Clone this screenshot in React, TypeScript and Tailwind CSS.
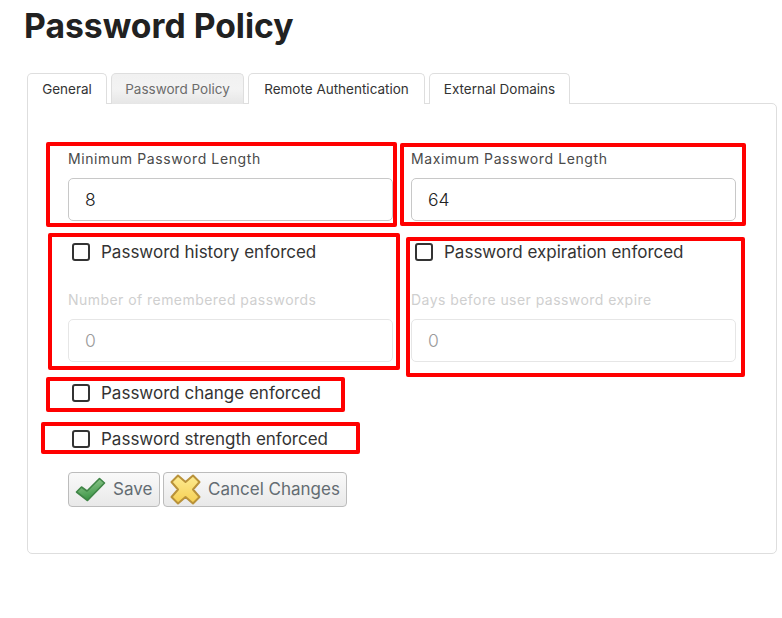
import { useState } from 'react';

const redBoxes = [
  'left-[46px] top-[142px] w-[351px] h-[85px]',
  'left-[400px] top-[143px] w-[346px] h-[83px]',
  'left-[48px] top-[233px] w-[352px] h-[137px]',
  'left-[406px] top-[237px] w-[339px] h-[140px]',
  'left-[46px] top-[377px] w-[299px] h-[35px]',
  'left-[41px] top-[422px] w-[319px] h-[32px]',
];

function Tab({ label, active, className }: { label: string; active?: boolean; className: string }) {
  return (
    <div
      className={`h-[31px] flex items-center justify-center rounded-t-[5px] border border-b-0 border-[#dedede] text-[13.5px] ${className} ${
        active ? 'bg-gradient-to-b from-[#f1f1f1] via-[#f3f3f3] to-[#e6e6e6] text-[#6c6c6c]' : 'bg-white text-[#333]'
      }`}
    >
      {label}
    </div>
  );
}

function Field({ label, value, disabled }: { label: string; value: string; disabled?: boolean }) {
  return (
    <div className="flex flex-col">
      <label
        className={`text-[14px] leading-5 pt-px -mb-px ${
          disabled ? 'text-[#cfcfcf] tracking-[0.45px]' : 'text-[#4a4a4a] tracking-[0.6px]'
        }`}
      >
        {label}
      </label>
      <input
        readOnly
        value={value}
        disabled={disabled}
        className={`mt-[10px] h-[43px] w-full rounded-[5px] border bg-white px-[16px] text-[17.5px] font-light outline-none ${
          disabled ? 'border-[#e6e6e6] text-[#9a9a9a]' : 'border-[#c8c8c8] text-[#222]'
        }`}
      />
    </div>
  );
}

function Check({ label }: { label: string }) {
  const [checked, setChecked] = useState(false);
  return (
    <label className="flex items-center h-[24px] pl-[4px]">
      <span
        onClick={() => setChecked(!checked)}
        className={`size-[18px] rounded-[3px] border-2 border-[#333] ${checked ? 'bg-[#333]' : 'bg-white'}`}
      />
      <span className="ml-[11px] pt-[2px] text-[17px] text-[#333]">{label}</span>
    </label>
  );
}

function CheckIcon() {
  return (
    <svg width="31" height="25" viewBox="0 0 31 25">
      <defs>
        <linearGradient id="chk" x1="0" y1="0" x2="0.3" y2="1">
          <stop offset="0" stopColor="#9fd09a" />
          <stop offset="1" stopColor="#3a9445" />
        </linearGradient>
      </defs>
      <path
        d="M1.5 15 L6.5 10 L12 14 L24.5 1.5 L29.5 6 L12.5 23.5 Z"
        fill="url(#chk)"
        stroke="#3f8546"
        strokeWidth="1.6"
        strokeLinejoin="round"
      />
    </svg>
  );
}

function CrossIcon() {
  return (
    <svg width="31" height="31" viewBox="0 0 31 31">
      <defs>
        <linearGradient id="crs" x1="0" y1="0" x2="0" y2="1">
          <stop offset="0" stopColor="#fdeb92" />
          <stop offset="1" stopColor="#f5cf52" />
        </linearGradient>
      </defs>
      <path
        d="M8 1.5 L15.5 8 L23 1.5 L29.5 8 L23 15.5 L29.5 23 L23 29.5 L15.5 23 L8 29.5 L1.5 23 L8 15.5 L1.5 8 Z"
        fill="url(#crs)"
        stroke="#b9923a"
        strokeWidth="2"
        strokeLinejoin="round"
      />
    </svg>
  );
}

function App() {
  return (
    <div className="relative w-[782px] h-[618px] overflow-hidden bg-white font-['Inter',sans-serif]">
      <div className="pl-[24px] pt-[4px]">
        <h1 className="text-[33.7px] leading-[44px] font-bold text-[#212121]">Password Policy</h1>
      </div>

      <div className="ml-[27px] mt-[25px] w-[750px]">
        <div className="flex gap-[4px]">
          <Tab label="General" className="w-[80px]" />
          <Tab label="Password Policy" active className="w-[133px]" />
          <Tab label="Remote Authentication" className="w-[177px]" />
          <Tab label="External Domains" className="w-[141px]" />
        </div>

        <div className="-mt-px h-[451px] rounded-b-[5px] rounded-tr-[5px] border border-[#dedede] bg-white pl-[40px] pt-[44px]">
          <div className="grid grid-cols-[325px_325px] gap-x-[18px]">
            <Field label="Minimum Password Length" value="8" />
            <Field label="Maximum Password Length" value="64" />

            <div className="mt-[19px]">
              <Check label="Password history enforced" />
              <div className="mt-[25px]">
                <Field label="Number of remembered passwords" value="0" disabled />
              </div>
            </div>
            <div className="mt-[19px]">
              <Check label="Password expiration enforced" />
              <div className="mt-[25px]">
                <Field label="Days before user password expire" value="0" disabled />
              </div>
            </div>
          </div>

          <div className="mt-[19px]">
            <Check label="Password change enforced" />
          </div>
          <div className="mt-[22px]">
            <Check label="Password strength enforced" />
          </div>

          <div className="mt-[21px] flex gap-[3px]">
            <button className="h-[35px] w-[92px] flex items-center rounded-[4px] border border-[#bcbcbc] bg-gradient-to-b from-[#f9f9f9] to-[#e9e9e9] pl-[6px] text-[17px] text-[#636c72]">
              <CheckIcon />
              <span className="ml-[7px]">Save</span>
            </button>
            <button className="h-[35px] w-[184px] flex items-center rounded-[4px] border border-[#bcbcbc] bg-gradient-to-b from-[#f9f9f9] to-[#e9e9e9] pl-[6px] text-[17px] text-[#636c72] whitespace-nowrap">
              <CrossIcon />
              <span className="ml-[7px]">Cancel Changes</span>
            </button>
          </div>
        </div>
      </div>

      {redBoxes.map(box => (
        <div key={box} className={`absolute border-[4px] border-[#ff0000] rounded-[2px] pointer-events-none ${box}`} />
      ))}
    </div>
  );
}

export default App;
